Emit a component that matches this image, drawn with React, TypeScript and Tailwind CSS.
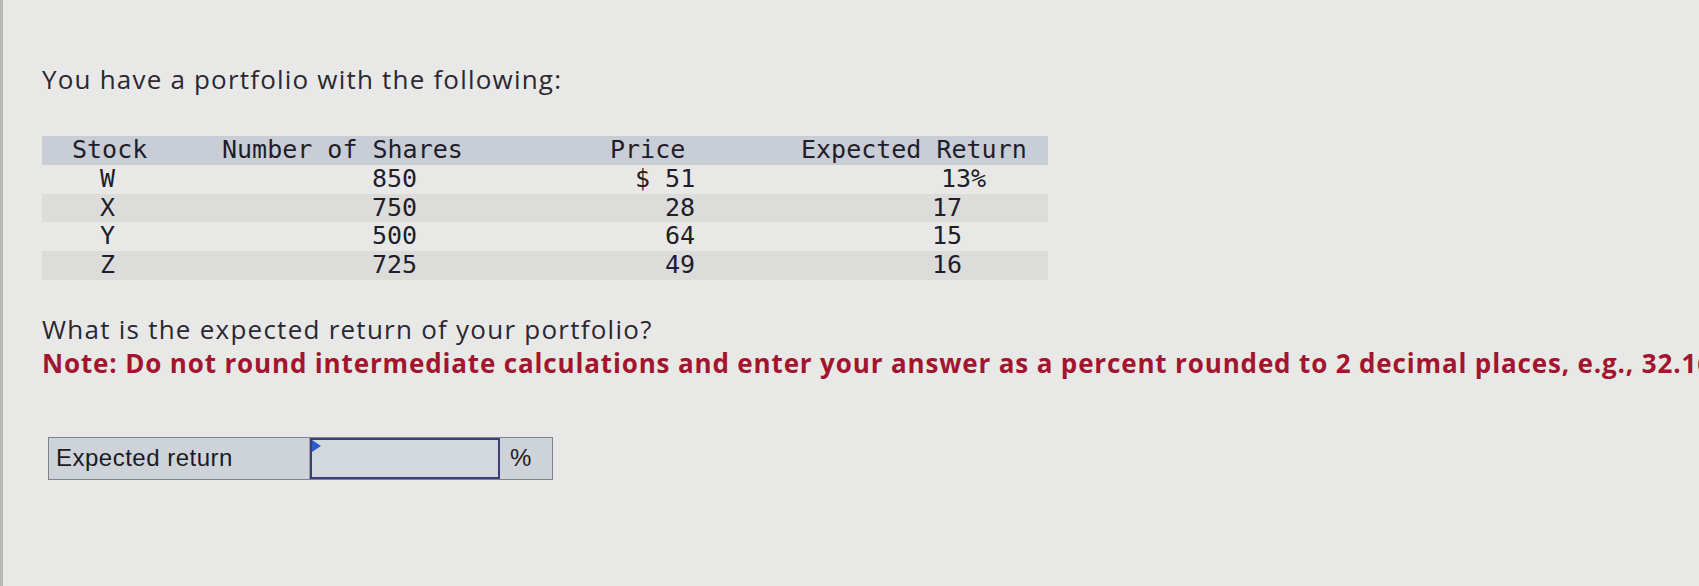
import { ReactElement } from 'react'

interface Row {
	stock: string
	shares: string
	price: string
	ret: string
	shaded: boolean
}

const rows: Row[] = [
	{ stock: 'W', shares: '850', price: '$ 51', ret: '13%', shaded: false },
	{ stock: 'X', shares: '750', price: '28', ret: '17', shaded: true },
	{ stock: 'Y', shares: '500', price: '64', ret: '15', shaded: false },
	{ stock: 'Z', shares: '725', price: '49', ret: '16', shaded: true },
]

const HoldingsTable = (): ReactElement => (
	<div className="mt-[40px] w-[1006px] font-['DejaVu_Sans_Mono',monospace] text-[25px] leading-[28.8px] text-[#211d2b] whitespace-pre">
		<div className="grid grid-cols-[150px_410px_190px_256px] h-[28.8px] bg-[#c9cdd5]">
			<div className="pl-[30px]">Stock</div>
			<div className="pl-[30px]">Number of Shares</div>
			<div className="pl-[8px]">Price</div>
			<div className="pl-[9px]">Expected Return</div>
		</div>

		{rows.map((row, i) => (
			<div
				key={row.stock}
				className={row.shaded
					? 'grid grid-cols-[150px_410px_190px_256px] h-[28.8px] bg-[#dcdcdb]'
					: 'grid grid-cols-[150px_410px_190px_256px] h-[28.8px]'}
			>
				<div className="pl-[58px]">{row.stock}</div>
				<div className="pl-[180px]">{row.shares}</div>
				<div className={i === 0 ? 'pl-[33px]' : 'pl-[63px]'}>{row.price}</div>
				<div className={i === 0 ? 'pl-[149px]' : 'pl-[140px]'}>{row.ret}</div>
			</div>
		))}
	</div>
)

const AnswerRow = (): ReactElement => (
	<div className="mt-[57px] ml-[6px] flex h-[43px] w-[505px] border border-[#80838d] bg-[#ced2d9] font-['Liberation_Sans',Arial,sans-serif] text-[24px] tracking-[0.5px] text-[#1b1b22]">
		<div className="w-[261px] flex items-center pl-[7px] border-r border-[#9a9da6]">Expected return</div>
		<div className="relative w-[190px] border-2 border-[#37407a] bg-[#d3d7de]">
			<div className="absolute left-0 top-0 w-0 h-0 border-t-[6px] border-b-[6px] border-l-[9px] border-t-transparent border-b-transparent border-l-[#2b5bcc]" />
		</div>
		<div className="flex-1 flex items-center pl-[10px]">%</div>
	</div>
)

export const App = (): ReactElement => (
	<div className="w-[1699px] h-[586px] overflow-hidden bg-[#e8e8e6] border-l-[3px] border-[#b9b9b8] font-['Open_Sans',sans-serif]">
		<div className="pl-[39px] pt-[62px]">
			<p className="text-[26px] leading-[34px] tracking-[1.2px] text-[#2b2733]">You have a portfolio with the following:</p>

			<HoldingsTable />

			<p className="mt-[32px] text-[26px] leading-[34px] tracking-[1.25px] text-[#2b2733]">What is the expected return of your portfolio?</p>
			<p className="text-[26px] leading-[34px] tracking-[0.85px] font-bold text-[#a3142e] whitespace-nowrap">
				Note: Do not round intermediate calculations and enter your answer as a percent rounded to 2 decimal places, e.g., 32.16.
			</p>

			<AnswerRow />
		</div>
	</div>
)

export default App
